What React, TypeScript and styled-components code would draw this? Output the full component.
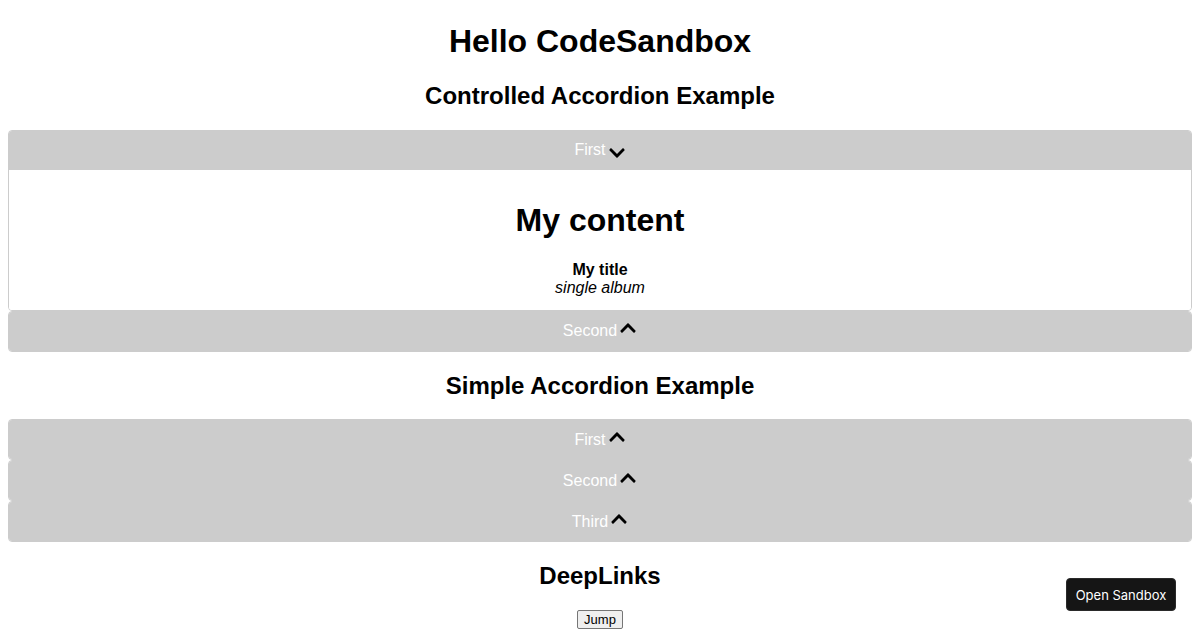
import React, { useState } from 'react';
import styled, { createGlobalStyle } from 'styled-components';
import { FaChevronDown, FaChevronUp } from 'react-icons/fa';

const GlobalStyle = createGlobalStyle`
  body {
    margin: 0;
    padding: 0 8px;
    font-family: "Liberation Sans", Arial, sans-serif;
    text-align: center;
    color: #000;
  }
`;

const Title = styled.h1`
  font-size: 32px;
  margin: 23.44px 0 21.44px;
`;

const SectionTitle = styled.h2`
  font-size: 24px;
  margin: 19.92px 0;
`;

const Item = styled.div`
  border: 1px solid #ccc;
  border-radius: 4px;
  overflow: hidden;
`;

const Header = styled.div`
  height: 39px;
  background: #ccc;
  color: #fff;
  font-size: 16px;
  display: flex;
  align-items: center;
  justify-content: center;
  cursor: pointer;
`;

const Chevron = styled.span<{ $open: boolean }>`
  display: inline-flex;
  color: #000;
  margin-left: 2px;
  transform: translateY(${(p) => (p.$open ? '3px' : '-3px')});
`;

const Panel = styled.div`
  padding: 11px 10px 13px;
  background: #fff;
`;

const ContentTitle = styled.h1`
  font-size: 32px;
  margin: 21.44px 0;
`;

const AlbumTitle = styled.div`
  font-weight: bold;
`;

const AlbumType = styled.div`
  font-style: italic;
`;

const JumpButton = styled.button`
  font-family: "Liberation Sans", Arial, sans-serif;
  font-size: 13px;
  padding: 1px 6px;
  margin-top: 0;
  border: 1px solid #767676;
  border-radius: 2px;
  background: #efefef;
  color: #000;
`;

const SandboxButton = styled.button`
  position: fixed;
  right: 24px;
  bottom: 19px;
  width: 110px;
  height: 33px;
  background: #151515;
  color: #fff;
  border: 1px solid #2a2a2a;
  border-radius: 4px;
  font-family: Inter, "Liberation Sans", sans-serif;
  font-size: 13px;
`;

type AccItemProps = {
  label: string;
  open: boolean;
  onToggle?: () => void;
  children?: React.ReactNode;
};

const AccordionItem = ({ label, open, onToggle, children }: AccItemProps) => (
  <Item>
    <Header onClick={onToggle}>
      {label}
      <Chevron $open={open}>
        {open ? <FaChevronDown size={18} /> : <FaChevronUp size={18} />}
      </Chevron>
    </Header>
    {open && <Panel>{children}</Panel>}
  </Item>
);

const Content = () => (
  <>
    <ContentTitle>My content</ContentTitle>
    <AlbumTitle>My title</AlbumTitle>
    <AlbumType>single album</AlbumType>
  </>
);

export default function App() {
  const [controlled, setControlled] = useState<number | null>(0);
  const [simple, setSimple] = useState<number | null>(null);

  return (
    <>
      <GlobalStyle />
      <Title>Hello CodeSandbox</Title>

      <SectionTitle>Controlled Accordion Example</SectionTitle>
      {['First', 'Second'].map((label, i) => (
        <AccordionItem
          key={label}
          label={label}
          open={controlled === i}
          onToggle={() => setControlled(controlled === i ? null : i)}
        >
          <Content />
        </AccordionItem>
      ))}

      <SectionTitle>Simple Accordion Example</SectionTitle>
      {['First', 'Second', 'Third'].map((label, i) => (
        <AccordionItem
          key={label}
          label={label}
          open={simple === i}
          onToggle={() => setSimple(simple === i ? null : i)}
        >
          <Content />
        </AccordionItem>
      ))}

      <SectionTitle>DeepLinks</SectionTitle>
      <JumpButton>Jump</JumpButton>

      <SandboxButton>Open Sandbox</SandboxButton>
    </>
  );
}
